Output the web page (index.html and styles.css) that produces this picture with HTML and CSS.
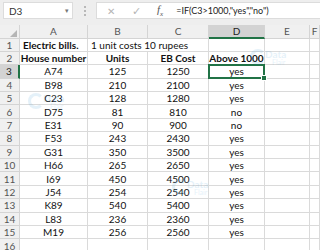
FILE: index.html
```html
<!DOCTYPE html>
<html>
<head>
<meta charset="utf-8">
<link rel="stylesheet" href="styles.css">
</head>
<body>
<div class="bar">
  <div class="namebox"><span>D3</span><span class="arrow">▾</span></div>
  <div class="dots"><i></i><i></i><i></i></div>
  <div class="fbox">
    <span class="ic x">✕</span>
    <span class="ic ok">✓</span>
    <span class="ic fx">f<sub>x</sub></span>
    <span class="ftext">=IF(C3&gt;1000,"yes","no")</span>
  </div>
</div>
<div class="sheet">
  <div class="hd corner"><svg width="7" height="7" viewBox="0 0 7 7"><polygon points="7,0 7,7 0,7" fill="#b5b5b5"/></svg></div>
  <div class="hd">A</div><div class="hd">B</div><div class="hd">C</div><div class="hd sel">D</div><div class="hd">E</div><div class="hd">F</div>

  <div class="rh">1</div><div class="c l b">Electric bills.</div><div class="c l ov">1 unit costs 10 rupees</div><div class="c"></div><div class="c"></div><div class="c"></div><div class="c"></div>
  <div class="rh">2</div><div class="c b">House number</div><div class="c b">Units</div><div class="c b">EB Cost</div><div class="c b">Above 1000</div><div class="c"></div><div class="c"></div>
  <div class="rh sel">3</div><div class="c">A74</div><div class="c">125</div><div class="c">1250</div><div class="c active">yes</div><div class="c"></div><div class="c"></div>
  <div class="rh">4</div><div class="c">B98</div><div class="c">210</div><div class="c">2100</div><div class="c">yes</div><div class="c"></div><div class="c"></div>
  <div class="rh">5</div><div class="c">C23</div><div class="c">128</div><div class="c">1280</div><div class="c">yes</div><div class="c"></div><div class="c"></div>
  <div class="rh">6</div><div class="c">D75</div><div class="c">81</div><div class="c">810</div><div class="c">no</div><div class="c"></div><div class="c"></div>
  <div class="rh">7</div><div class="c">E31</div><div class="c">90</div><div class="c">900</div><div class="c">no</div><div class="c"></div><div class="c"></div>
  <div class="rh">8</div><div class="c">F53</div><div class="c">243</div><div class="c">2430</div><div class="c">yes</div><div class="c"></div><div class="c"></div>
  <div class="rh">9</div><div class="c">G31</div><div class="c">350</div><div class="c">3500</div><div class="c">yes</div><div class="c"></div><div class="c"></div>
  <div class="rh">10</div><div class="c">H66</div><div class="c">265</div><div class="c">2650</div><div class="c">yes</div><div class="c"></div><div class="c"></div>
  <div class="rh">11</div><div class="c">I69</div><div class="c">450</div><div class="c">4500</div><div class="c">yes</div><div class="c"></div><div class="c"></div>
  <div class="rh">12</div><div class="c">J54</div><div class="c">254</div><div class="c">2540</div><div class="c">yes</div><div class="c"></div><div class="c"></div>
  <div class="rh">13</div><div class="c">K89</div><div class="c">540</div><div class="c">5400</div><div class="c">yes</div><div class="c"></div><div class="c"></div>
  <div class="rh">14</div><div class="c">L83</div><div class="c">236</div><div class="c">2360</div><div class="c">yes</div><div class="c"></div><div class="c"></div>
  <div class="rh">15</div><div class="c">M19</div><div class="c">256</div><div class="c">2560</div><div class="c">yes</div><div class="c"></div><div class="c"></div>
  <div class="rh">16</div><div class="c"></div><div class="c"></div><div class="c"></div><div class="c"></div><div class="c"></div><div class="c"></div>
</div>
<div class="wm wm1"><span class="ring"></span><span class="w1">Data</span><span class="w2">Flair</span></div>
<div class="wm wm2"><span class="ring"></span><span class="w1">Data</span><span class="w2">Flair</span></div>
<div class="wm wm3"><span class="ring"></span><span class="w1">Data</span><span class="w2">Flair</span></div>
</body>
</html>
```
FILE: styles.css
```css
html, body {
  margin: 0;
  padding: 0;
  width: 320px;
  height: 250px;
  overflow: hidden;
  background: #ffffff;
  font-family: Lato, "Liberation Sans", sans-serif;
  position: relative;
}

.bar {
  height: 25px;
  background: #eeeeee;
  display: flex;
  align-items: flex-start;
  padding: 2px 0 0 3px;
  box-sizing: border-box;
}

.namebox {
  width: 70px;
  height: 17px;
  background: #fff;
  border: 1px solid #dcdcdc;
  box-sizing: border-box;
  display: flex;
  align-items: center;
  justify-content: space-between;
  padding: 0 3px 0 5px;
  font-size: 10px;
  color: #333;
}

.arrow {
  font-size: 7px;
  color: #777;
}

.dots {
  width: 23px;
  height: 17px;
  display: flex;
  flex-direction: column;
  align-items: center;
  justify-content: center;
  gap: 2px;
}

.dots i {
  width: 2px;
  height: 2px;
  background: #b8b8b8;
  display: block;
}

.fbox {
  flex: 1;
  height: 17px;
  background: #fff;
  border: 1px solid #dcdcdc;
  border-right: none;
  box-sizing: border-box;
  display: flex;
  align-items: center;
  font-size: 10px;
  color: #222;
  white-space: nowrap;
}

.ic {
  color: #b5b5b5;
  font-size: 11px;
}

.x { margin-left: 10px; font-size: 10px; }
.ok { margin-left: 17px; }
.fx {
  margin-left: 16px;
  color: #555;
  font-style: italic;
  font-family: "Liberation Serif", serif;
  font-size: 11px;
}
.fx sub { font-size: 7px; }

.ftext {
  margin-left: 13px;
  font-size: 9px;
  color: #222;
}

.sheet {
  display: grid;
  grid-template-columns: 20px 68px 60px 61px 56px 45px 10px;
  grid-template-rows: 13.5px repeat(16, 13.4px);
  font-size: 10px;
}

.hd, .rh {
  background: #f0f0f0;
  color: #555;
  border-right: 1px solid #d4d4d4;
  border-bottom: 1px solid #d4d4d4;
  box-sizing: border-box;
  display: flex;
  align-items: center;
  justify-content: center;
  font-size: 10px;
}

.corner {
  align-items: flex-end;
  justify-content: flex-end;
  padding: 0 2px 1px 0;
}
.corner svg { display: block; }

.hd.sel {
  background: #d3d3d3;
  color: #222;
  border-bottom: 2px solid #217346;
}

.rh.sel {
  background: #d3d3d3;
  color: #222;
  border-right: 2px solid #217346;
}

.c {
  border-right: 1px solid #dadada;
  border-bottom: 1px solid #dadada;
  box-sizing: border-box;
  display: flex;
  align-items: center;
  justify-content: center;
  color: #111;
  white-space: nowrap;
  min-width: 0;
}

.c.l {
  justify-content: flex-start;
  padding-left: 3px;
}

.c.b { font-weight: bold; }

.c.ov {
  border-right: none;
  overflow: visible;
  position: relative;
  z-index: 1;
}

.active {
  position: relative;
}

.active::after {
  content: "";
  position: absolute;
  left: -1px;
  top: -1px;
  right: -1px;
  bottom: -1px;
  border: 2px solid #217346;
}

.active::before {
  content: "";
  position: absolute;
  right: -3px;
  bottom: -3px;
  width: 4px;
  height: 4px;
  background: #217346;
  border: 1px solid #fff;
  z-index: 2;
}

.wm {
  position: absolute;
  opacity: 0.14;
  pointer-events: none;
  width: 44px;
  height: 22px;
}

.wm .ring {
  position: absolute;
  left: 0;
  top: 1px;
  width: 16px;
  height: 16px;
  border-radius: 50%;
  border: 3px solid #4a9fd8;
  border-right-color: transparent;
  box-sizing: border-box;
}

.wm .w1 {
  position: absolute;
  left: 15px;
  top: 0;
  font-size: 10px;
  font-weight: bold;
  color: #4a9fd8;
}

.wm .w2 {
  position: absolute;
  left: 22px;
  top: 10px;
  font-size: 7px;
  color: #4a9fd8;
}

.wm1 { left: 250px; top: 48px; }
.wm2 { left: 28px; top: 92px; }
.wm3 { left: 172px; top: 178px; }
```
